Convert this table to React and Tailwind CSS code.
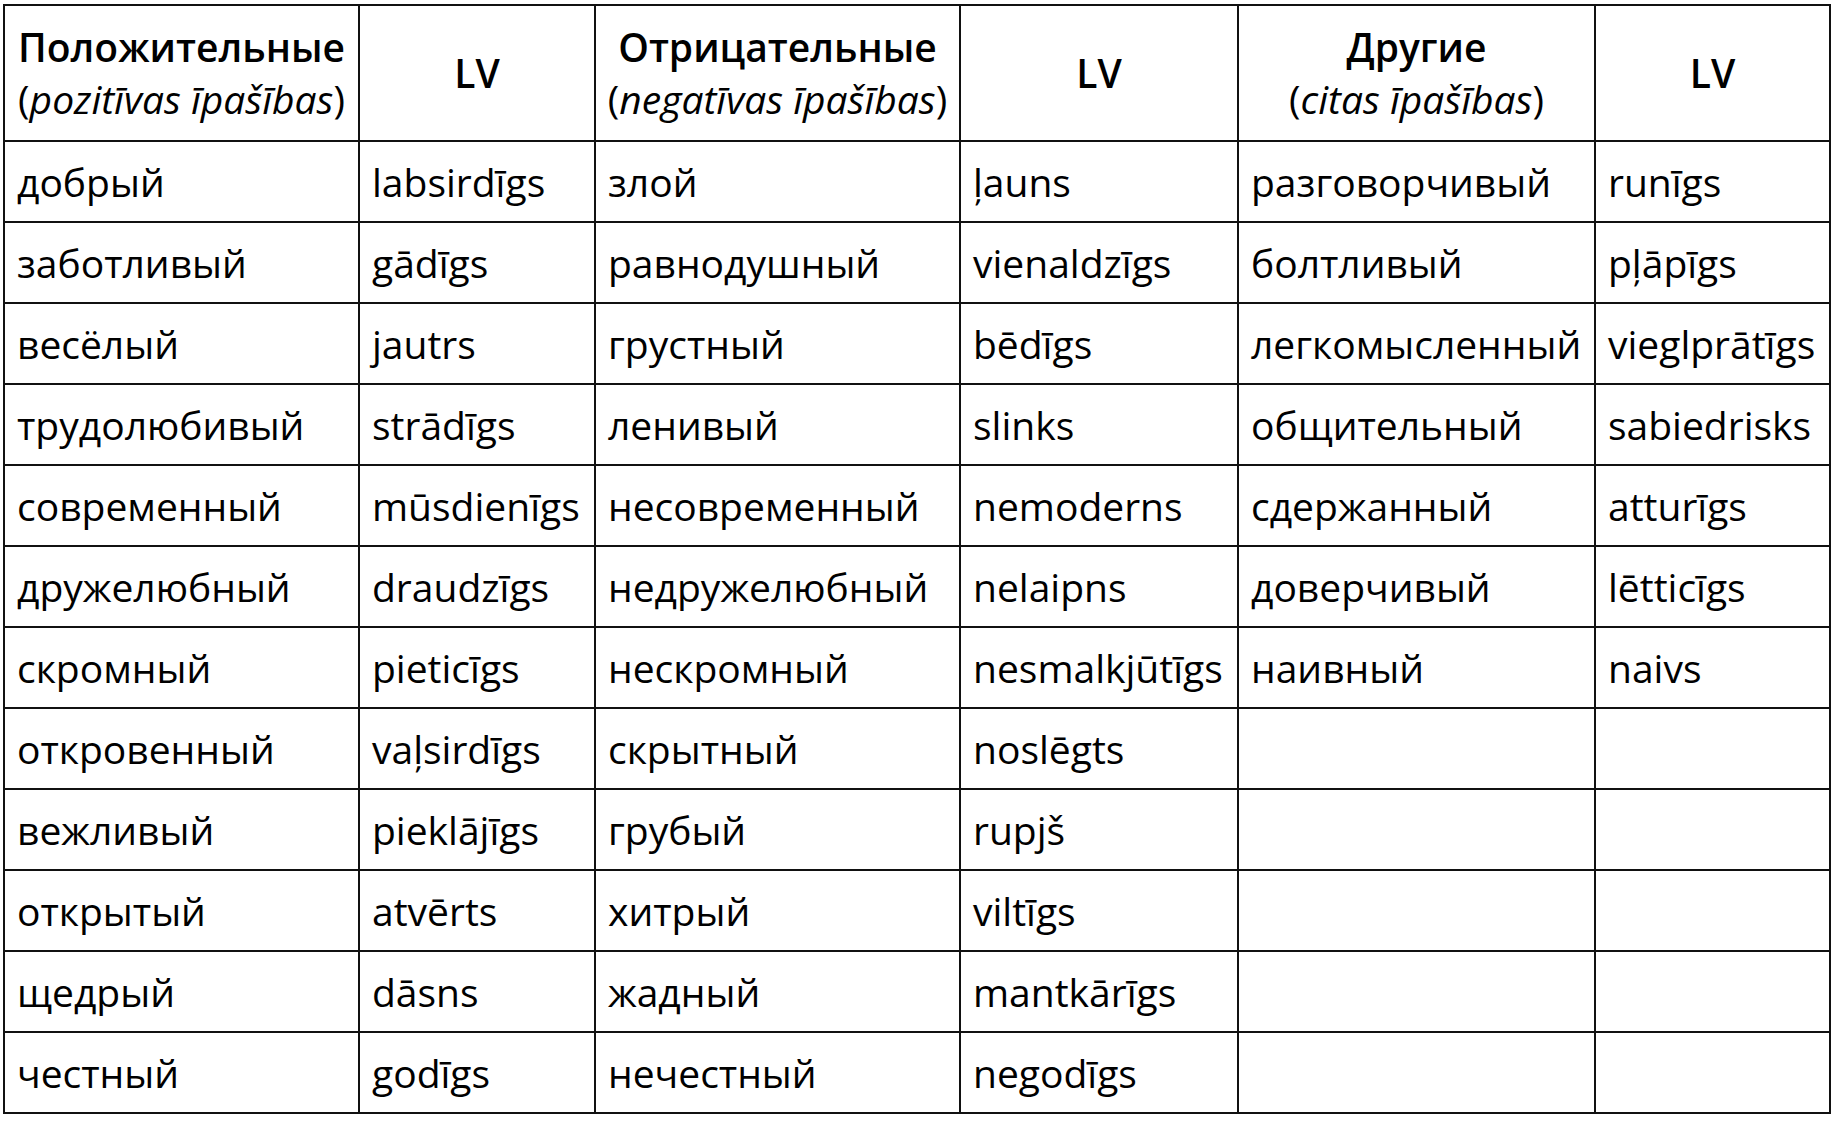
const HEAD = [
  { title: 'Положительные', sub: 'pozitīvas īpašības' },
  { title: 'LV' },
  { title: 'Отрицательные', sub: 'negatīvas īpašības' },
  { title: 'LV' },
  { title: 'Другие', sub: 'citas īpašības' },
  { title: 'LV' },
];

const ROWS = [
  ['добрый', 'labsirdīgs', 'злой', 'ļauns', 'разговорчивый', 'runīgs'],
  ['заботливый', 'gādīgs', 'равнодушный', 'vienaldzīgs', 'болтливый', 'pļāpīgs'],
  ['весёлый', 'jautrs', 'грустный', 'bēdīgs', 'легкомысленный', 'vieglprātīgs'],
  ['трудолюбивый', 'strādīgs', 'ленивый', 'slinks', 'общительный', 'sabiedrisks'],
  ['современный', 'mūsdienīgs', 'несовременный', 'nemoderns', 'сдержанный', 'atturīgs'],
  ['дружелюбный', 'draudzīgs', 'недружелюбный', 'nelaipns', 'доверчивый', 'lētticīgs'],
  ['скромный', 'pieticīgs', 'нескромный', 'nesmalkjūtīgs', 'наивный', 'naivs'],
  ['откровенный', 'vaļsirdīgs', 'скрытный', 'noslēgts', '', ''],
  ['вежливый', 'pieklājīgs', 'грубый', 'rupjš', '', ''],
  ['открытый', 'atvērts', 'хитрый', 'viltīgs', '', ''],
  ['щедрый', 'dāsns', 'жадный', 'mantkārīgs', '', ''],
  ['честный', 'godīgs', 'нечестный', 'negodīgs', '', ''],
];

const WIDTHS = ['w-[355px]', 'w-[236px]', 'w-[365px]', 'w-[278px]', 'w-[357px]', 'w-[235px]'];

export default function App() {
  return (
    <div className="min-h-[1128px] bg-white pt-[4px] pl-[3px] text-black" style={{ fontFamily: '"Open Sans", "Noto Sans", sans-serif' }}>
      <table className="table-fixed border-collapse w-[1828px] text-[39px] leading-[53px]">
        <colgroup>
          {WIDTHS.map((w, i) => <col key={i} className={w} />)}
        </colgroup>
        <thead>
          <tr>
            {HEAD.map((h, i) => (
              <th key={i} className="border-2 border-[#111] px-[10px] py-[15px] leading-[52px] text-center align-middle whitespace-nowrap">
                <div className="font-semibold">{h.title}</div>
                {h.sub && (
                  <div className="font-normal">(<span className="italic">{h.sub}</span>)</div>
                )}
              </th>
            ))}
          </tr>
        </thead>
        <tbody>
          {ROWS.map((r, ri) => (
            <tr key={ri}>
              {r.map((c, ci) => (
                <td key={ci} className="border-2 border-[#111] pl-[12px] pr-[4px] py-[13px] align-middle whitespace-nowrap">
                  {c || '\u00a0'}
                </td>
              ))}
            </tr>
          ))}
        </tbody>
      </table>
    </div>
  );
}
